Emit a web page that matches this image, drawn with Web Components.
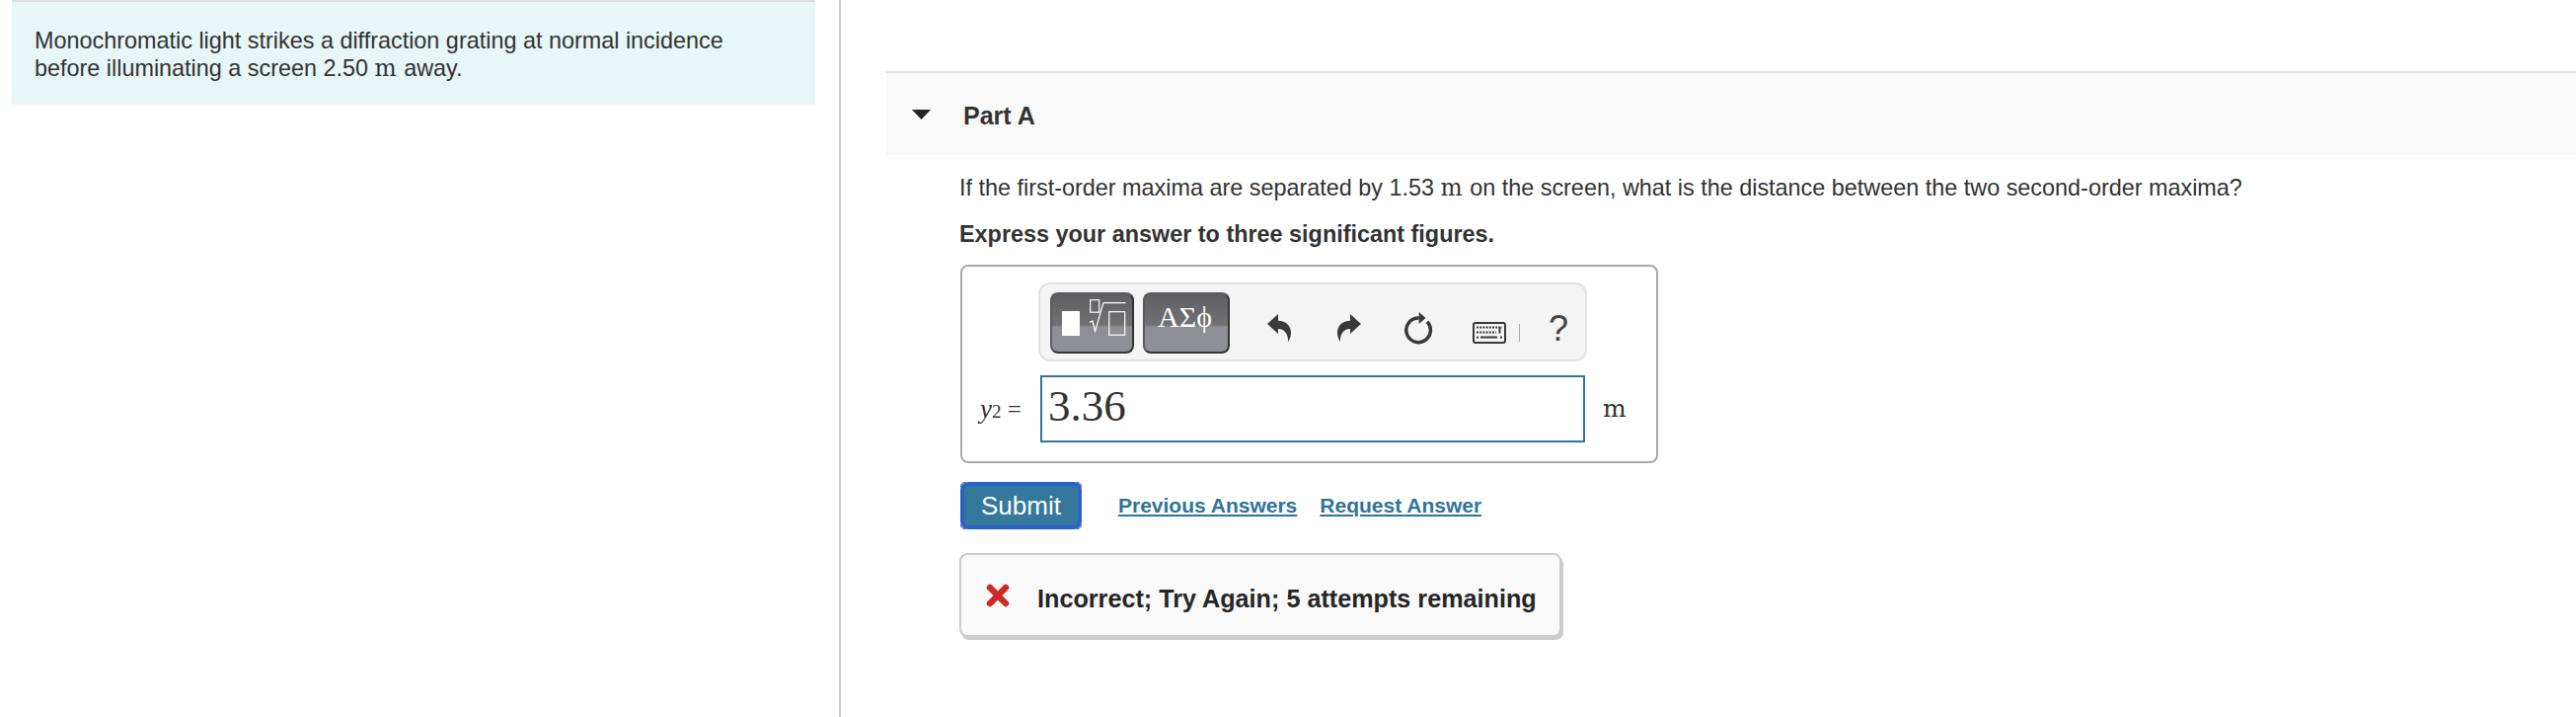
<!DOCTYPE html>
<html lang="en">
<head>
<meta charset="utf-8">
<title>Part A</title>
<style>
  html, body { margin: 0; height: 100%; background: #fff; }
  body { font-family: "Liberation Sans", Arial, sans-serif; color: #333; }
</style>
</head>
<body>
<mp-page>
  <mp-intro slot="left">Monochromatic light strikes a diffraction grating at normal incidence<br>before illuminating a screen 2.50 <mp-unit>m</mp-unit> away.</mp-intro>
  <mp-part slot="right" title-text="Part A">
    <p-line>If the first-order maxima are separated by 1.53 <mp-unit>m</mp-unit> on the screen, what is the distance between the two second-order maxima?</p-line>
    <p-line strong>Express your answer to three significant figures.</p-line>
    <mp-answer value="3.36" unit="m"></mp-answer>
    <mp-actions></mp-actions>
    <mp-feedback>Incorrect; Try Again; 5 attempts remaining</mp-feedback>
  </mp-part>
</mp-page>

<script>
class MpPage extends HTMLElement {
  connectedCallback() {
    this.attachShadow({ mode: 'open' });
    this.shadowRoot.innerHTML = `
      <style>
        :host { display: flex; height: 726px; overflow: hidden; }
        .left { width: 850px; flex: none; padding: 0 24px 0 12px; box-sizing: border-box; }
        .divider { width: 2px; flex: none; background: #c5cfe2; }
        .right { flex: 1; min-width: 0; padding: 72px 0 0 46px; }
      </style>
      <div class="left"><slot name="left"></slot></div>
      <div class="divider"></div>
      <div class="right"><slot name="right"></slot></div>
    `;
  }
}
customElements.define('mp-page', MpPage);

class MpUnit extends HTMLElement {
  connectedCallback() {
    this.attachShadow({ mode: 'open' });
    this.shadowRoot.innerHTML = `
      <style>
        :host { display: inline; font-family: "DejaVu Serif", serif; font-size: 1em; }
      </style>
      <slot></slot>
    `;
  }
}
customElements.define('mp-unit', MpUnit);

class MpIntro extends HTMLElement {
  connectedCallback() {
    this.attachShadow({ mode: 'open' });
    this.shadowRoot.innerHTML = `
      <style>
        :host {
          display: block;
          border-top: 2px solid #ddd;
          background: #e7f6f6;
          height: 104px;
          padding-left: 23px;
          font-size: 23.4px;
          line-height: 28px;
          color: #333;
        }
        div { padding-top: 25px; }
      </style>
      <div><slot></slot></div>
    `;
  }
}
customElements.define('mp-intro', MpIntro);

class MpPart extends HTMLElement {
  connectedCallback() {
    this.attachShadow({ mode: 'open' });
    this.shadowRoot.innerHTML = `
      <style>
        :host { display: block; }
        header {
          display: flex;
          align-items: center;
          height: 85px;
          border-top: 2px solid #e0e0e0;
          background: #f9f9f9;
          box-sizing: border-box;
          padding-left: 26px;
        }
        svg { width: 19px; height: 10px; flex: none; margin-right: 33px; }
        h2 { margin: 0; padding-top: 3px; font-size: 25px; font-weight: 700; color: #333; }
        .body { padding: 18px 0 0 74px; }
      </style>
      <header>
        <svg viewBox="0 0 19 10"><path d="M0 0H19L9.5 10Z" fill="#222"/></svg>
        <h2>${this.getAttribute('title-text')}</h2>
      </header>
      <div class="body"><slot></slot></div>
    `;
  }
}
customElements.define('mp-part', MpPart);

class PLine extends HTMLElement {
  connectedCallback() {
    this.attachShadow({ mode: 'open' });
    this.shadowRoot.innerHTML = `
      <style>
        :host { display: block; font-size: 23.4px; line-height: 30px; margin-bottom: 17px; color: #333; }
        :host([strong]) { font-weight: 700; margin-bottom: 16px; }
      </style>
      <slot></slot>
    `;
  }
}
customElements.define('p-line', PLine);

class MpToolbar extends HTMLElement {
  connectedCallback() {
    this.attachShadow({ mode: 'open' });
    this.shadowRoot.innerHTML = `
      <style>
        :host {
          display: flex;
          align-items: flex-start;
          width: 556px;
          height: 80px;
          box-sizing: border-box;
          background: #f4f4f4;
          border: 2px solid #e2e2e2;
          border-radius: 12px;
          padding: 8px 0 0 10px;
        }
        .btn {
          height: 62px;
          box-sizing: border-box;
          border-radius: 8px;
          border: 2px solid #343436;
          border-top-color: #5a5a5e;
          border-left-color: #5a5a5e;
          background: linear-gradient(#606063, #717174 31px, #8e8e96 33px, #8f8f96);
          flex: none;
          color: #fff;
        }
        .math { width: 85px; margin-right: 9px; }
        .sym {
          width: 88px;
          padding-right: 3px;
          font-family: "Liberation Serif", serif;
          font-size: 30px;
          line-height: 45px;
          text-align: center;
        }
        .btn svg { display: block; }
        .tools { display: flex; align-items: flex-start; }
        .tools svg { display: block; flex: none; }
        .undo { margin: 22px 0 0 38px; }
        .redo { margin: 22px 0 0 47px; }
        .reload { margin: 20px 0 0 44px; }
        .keys { margin: 30px 0 0 39px; }
        .sep { width: 1px; height: 18px; background: #aaa; margin: 32px 0 0 13px; flex: none; }
        .help { margin: 19px 0 0 29px; font-size: 36px; line-height: 36px; color: #444; }
      </style>
      <div class="btn math">
        <svg width="81" height="58" viewBox="0 0 81 58" fill="none" stroke="#fff" stroke-width="1.2">
          <rect x="10" y="17" width="18" height="25" fill="#fff" stroke="none"/>
          <rect x="38.7" y="5.7" width="9" height="12.5"/>
          <path d="M38 28.5l3-1.5 2.5 10.5L52 8.700h22.500"/>
          <rect x="57.700" y="17.700" width="16" height="23.500"/>
        </svg>
      </div>
      <div class="btn sym">ΑΣϕ</div>
      <div class="tools">
        <svg class="undo" width="24" height="28" viewBox="0 0 24 28"><path fill="#3a3a3a" d="M0 10 11 0v6.700c8 0 13 5.300 13 12.300 0 4-1.500 7-3 9 .5-7-3-13-10-13v5z"/></svg>
        <svg class="redo" width="24" height="28" viewBox="0 0 24 28"><path fill="#3a3a3a" d="M24 10 13 0v6.700C5 6.700 0 12 0 19c0 4 1.500 7 3 9-.5-7 3-13 10-13v5z"/></svg>
        <svg class="reload" width="30" height="34" viewBox="0 0 30 34">
          <path fill="none" stroke="#3a3a3a" stroke-width="3.500" d="M14.700 6A12.300 12.300 0 1 0 23 9.800"/>
          <path fill="#3a3a3a" d="M14.700 0 21.500 6l-6.800 6z"/>
        </svg>
        <svg class="keys" width="34" height="22" viewBox="0 0 34 22">
          <rect x="1" y="1" width="32" height="20" rx="2" fill="none" stroke="#3a3a3a" stroke-width="2"/>
          <path stroke="#3a3a3a" stroke-width="2" stroke-dasharray="2 1.200" fill="none" d="M4 5.500h26M4 10.500h20"/>
          <path stroke="#3a3a3a" stroke-width="2" fill="none" d="M8 15.500h17M4 15.500h2M28 15.500h2M27.500 5v6.500"/>
        </svg>
        <div class="sep"></div>
        <div class="help">?</div>
      </div>
    `;
  }
}
customElements.define('mp-toolbar', MpToolbar);

class MpAnswer extends HTMLElement {
  connectedCallback() {
    this.attachShadow({ mode: 'open' });
    this.shadowRoot.innerHTML = `
      <style>
        :host {
          display: block;
          width: 707px;
          height: 201px;
          margin-left: 1px;
          box-sizing: border-box;
          border: 2px solid #aaa;
          border-radius: 8px;
          padding-top: 16px;
        }
        mp-toolbar { margin-left: 77px; }
        .row { display: flex; align-items: center; margin-top: 14px; }
        .label {
          width: 79px;
          flex: none;
          box-sizing: border-box;
          padding-left: 18px;
          font-family: "Liberation Serif", serif;
          font-size: 25px;
          color: #333;
        }
        .label i { font-size: 27px; }
        .label sub { font-size: 19px; vertical-align: baseline; }
        .input {
          width: 552px;
          height: 68px;
          flex: none;
          box-sizing: border-box;
          border: 2px solid #34769a;
          padding-left: 6px;
          font-family: "Liberation Serif", serif;
          font-size: 45px;
          line-height: 58px;
          color: #333;
        }
        .unit { margin: -2px 0 0 18px; font-family: "DejaVu Serif", serif; font-size: 25px; color: #333; }
      </style>
      <mp-toolbar></mp-toolbar>
      <div class="row">
        <div class="label"><i>y</i><sub>2</sub> =</div>
        <div class="input">${this.getAttribute('value')}</div>
        <div class="unit">${this.getAttribute('unit')}</div>
      </div>
    `;
  }
}
customElements.define('mp-answer', MpAnswer);

class MpActions extends HTMLElement {
  connectedCallback() {
    this.attachShadow({ mode: 'open' });
    this.shadowRoot.innerHTML = `
      <style>
        :host { display: flex; align-items: flex-start; margin: 19px 0 0 1px; height: 48px; }
        .submit {
          position: relative;
          width: 123px;
          height: 48px;
          box-sizing: border-box;
          flex: none;
          display: flex;
          align-items: center;
          justify-content: center;
          background: #34789c;
          border: 4px solid #2a62c9;
          border-radius: 8px;
          color: #fff;
          font-size: 26px;
        }
        .submit svg { position: absolute; left: -4px; top: -4px; }
        .links { display: flex; gap: 23px; margin: 10px 0 0 37px; }
        a { color: #2f7499; font-size: 21px; font-weight: 700; text-decoration: underline; line-height: 28px; }
      </style>
      <div class="submit">Submit
        <svg width="123" height="48" viewBox="0 0 123 48" fill="none" stroke="#2c5f7c" stroke-width="1">
          <path d="M.5 5Q.5 .5 5 .5M118 .5Q122.500 .5 122.500 5M.5 43Q.5 47.500 5 47.500M118 47.500Q122.500 47.500 122.500 43"/>
        </svg>
      </div>
      <div class="links">
        <a>Previous Answers</a>
        <a>Request Answer</a>
      </div>
    `;
  }
}
customElements.define('mp-actions', MpActions);

class MpFeedback extends HTMLElement {
  connectedCallback() {
    this.attachShadow({ mode: 'open' });
    this.shadowRoot.innerHTML = `
      <style>
        :host {
          display: flex;
          align-items: center;
          width: 610px;
          height: 85px;
          box-sizing: border-box;
          margin-top: 24px;
          padding-left: 25px;
          background: #f9f9f9;
          border: 2px solid #ccc;
          border-radius: 8px;
          box-shadow: 2px 3px 0 #ccc;
          font-size: 25.2px;
          font-weight: 700;
          color: #262626;
        }
        svg { flex: none; margin-right: 28px; }
        span { padding-top: 8px; }
      </style>
      <svg width="24" height="24" viewBox="0 0 24 24"><path d="M4 4L20 20M20 4L4 20" stroke="#cc2b25" stroke-width="6.500" stroke-linecap="round"/></svg>
      <span><slot></slot></span>
    `;
  }
}
customElements.define('mp-feedback', MpFeedback);
</script>
</body>
</html>
